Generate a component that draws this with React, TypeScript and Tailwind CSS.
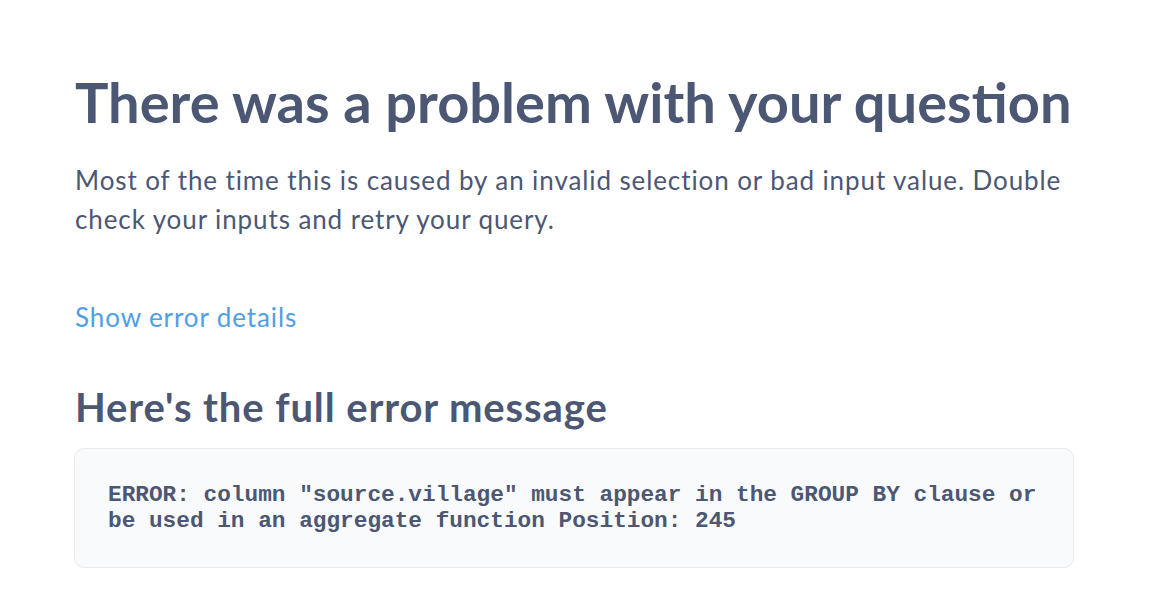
export default function App() {
  return (
    <div className="min-h-screen bg-white font-['Lato',sans-serif] text-[#4c5773]">
      <div className="w-[999px] pl-[75px] pt-[68px] box-content">
        <h1 className="text-[56px] font-bold leading-[1.2]">There was a problem with your question</h1>
        <p className="mt-[26px] text-[26px] leading-[39px] tracking-[0.9px]">
          Most of the time this is caused by an invalid selection or bad input value. Double check your inputs and retry your query.
        </p>
        <button className="mt-[59px] block text-[26px] leading-[39px] tracking-[0.9px] text-[#509ee3]">Show error details</button>
        <h2 className="mt-[46px] text-[40px] font-bold leading-[1.2] tracking-[0.9px]">Here's the full error message</h2>
        <div className="-ml-px mt-[17px] rounded-[10px] border border-[#e9ecef] bg-[#f9fafb] p-[33px]">
          <pre className="whitespace-pre-wrap font-['Liberation_Mono',monospace] text-[22.75px] font-bold leading-[26px]">
            ERROR: column "source.village" must appear in the GROUP BY clause or be used in an aggregate function Position: 245
          </pre>
        </div>
      </div>
    </div>
  );
}
